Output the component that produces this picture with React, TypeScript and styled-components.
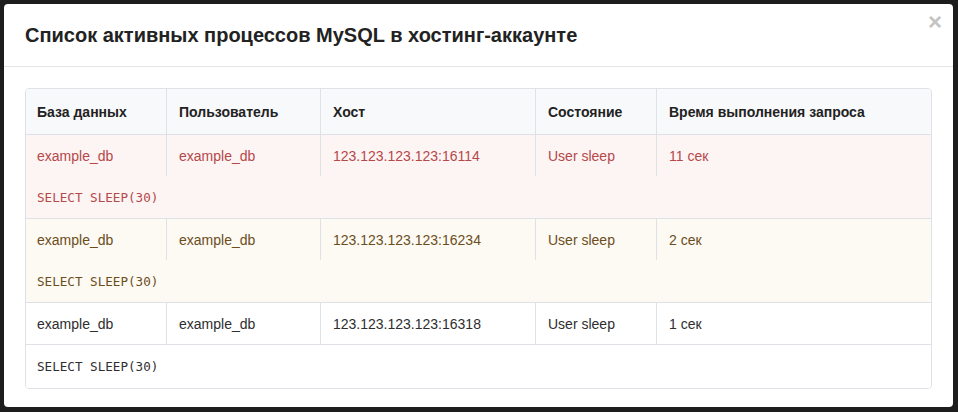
import React from "react";
import styled, { createGlobalStyle } from "styled-components";

const Global = createGlobalStyle`
  html, body { margin: 0; padding: 0; background: #1d1d1d; }
  body { font-family: "Liberation Sans", Arial, sans-serif; width: 958px; height: 412px; overflow: hidden; }
`;

const Backdrop = styled.div`
  padding: 4px 0 0 4px;
  height: 408px;
  box-sizing: border-box;
`;

const Modal = styled.div`
  width: 949px;
  height: 403px;
  background: #fff;
  border-radius: 4px;
  display: flex;
  flex-direction: column;
`;

const Header = styled.div`
  height: 62px;
  flex: none;
  box-sizing: content-box;
  border-bottom: 1px solid #e5e5e5;
  padding: 0 21px 0;
  display: flex;
  align-items: center;
  justify-content: space-between;
`;

const Title = styled.h4`
  margin: 0;
  font-size: 20px;
  font-weight: bold;
  color: #222;
`;

const Close = styled.span`
  font-size: 24px;
  font-weight: bold;
  color: #c4c4c4;
  line-height: 1;
  margin-right: -10px;
  margin-top: -26px;
`;

const Body = styled.div`
  padding: 21px 21px 20px;
`;

const Table = styled.table`
  width: 907px;
  border-collapse: separate;
  border-spacing: 0;
  border: 1px solid #dee2e6;
  border-radius: 4px;
  overflow: hidden;
  table-layout: fixed;
  font-size: 14px;
`;

type Tone = "danger" | "warning" | "plain";

const toneBg: Record<Tone, string> = {
  danger: "#fdf4f4",
  warning: "#fdf9f3",
  plain: "#ffffff",
};
const toneFg: Record<Tone, string> = {
  danger: "#b54848",
  warning: "#6b4e1c",
  plain: "#2e2e2e",
};

const Th = styled.th`
  background: #f8f9fa;
  text-align: left;
  font-weight: bold;
  font-size: 14px;
  color: #222;
  height: 45px;
  padding: 0 12px;
  border-bottom: 1px solid #dee2e6;
  &:first-child { padding-left: 11px; }
  & + & { border-left: 1px solid #dee2e6; }
`;

const Tr = styled.tr<{ $tone: Tone }>`
  background: ${(p) => toneBg[p.$tone]};
  color: ${(p) => toneFg[p.$tone]};
`;

const Td = styled.td<{ $sep?: boolean }>`
  height: 41px;
  padding: 0 12px;
  vertical-align: middle;
  ${(p) => (p.$sep ? "border-bottom: 1px solid #dee2e6;" : "")}
  &:first-child { padding-left: 11px; }
  & + & { border-left: 1px solid #dee2e6; }
`;

const SqlTd = styled.td<{ $last?: boolean }>`
  height: ${(p) => (p.$last ? 43 : 42)}px;
  padding: 0 11px;
  font-family: "DejaVu Sans Mono", "Liberation Mono", monospace;
  font-size: 12.6px;
  ${(p) => (p.$last ? "" : "border-bottom: 1px solid #dee2e6;")}
`;

const rows: { tone: Tone; host: string; time: string }[] = [
  { tone: "danger", host: "123.123.123.123:16114", time: "11 сек" },
  { tone: "warning", host: "123.123.123.123:16234", time: "2 сек" },
  { tone: "plain", host: "123.123.123.123:16318", time: "1 сек" },
];

export default function App() {
  return (
    <>
      <Global />
      <Backdrop>
        <Modal>
          <Header>
            <Title>Список активных процессов MySQL в хостинг-аккаунте</Title>
            <Close>×</Close>
          </Header>
          <Body>
            <Table>
              <colgroup>
                <col style={{ width: 140 }} />
                <col style={{ width: 154 }} />
                <col style={{ width: 215 }} />
                <col style={{ width: 121 }} />
                <col />
              </colgroup>
              <thead>
                <tr>
                  <Th>База данных</Th>
                  <Th>Пользователь</Th>
                  <Th>Хост</Th>
                  <Th>Состояние</Th>
                  <Th>Время выполнения запроса</Th>
                </tr>
              </thead>
              <tbody>
                {rows.map((r, i) => {
                  const last = i === rows.length - 1;
                  return (
                    <React.Fragment key={i}>
                      <Tr $tone={r.tone}>
                        <Td $sep={last}>example_db</Td>
                        <Td $sep={last}>example_db</Td>
                        <Td $sep={last}>{r.host}</Td>
                        <Td $sep={last}>User sleep</Td>
                        <Td $sep={last}>{r.time}</Td>
                      </Tr>
                      <Tr $tone={r.tone}>
                        <SqlTd colSpan={5} $last={last}>SELECT SLEEP(30)</SqlTd>
                      </Tr>
                    </React.Fragment>
                  );
                })}
              </tbody>
            </Table>
          </Body>
        </Modal>
      </Backdrop>
    </>
  );
}
